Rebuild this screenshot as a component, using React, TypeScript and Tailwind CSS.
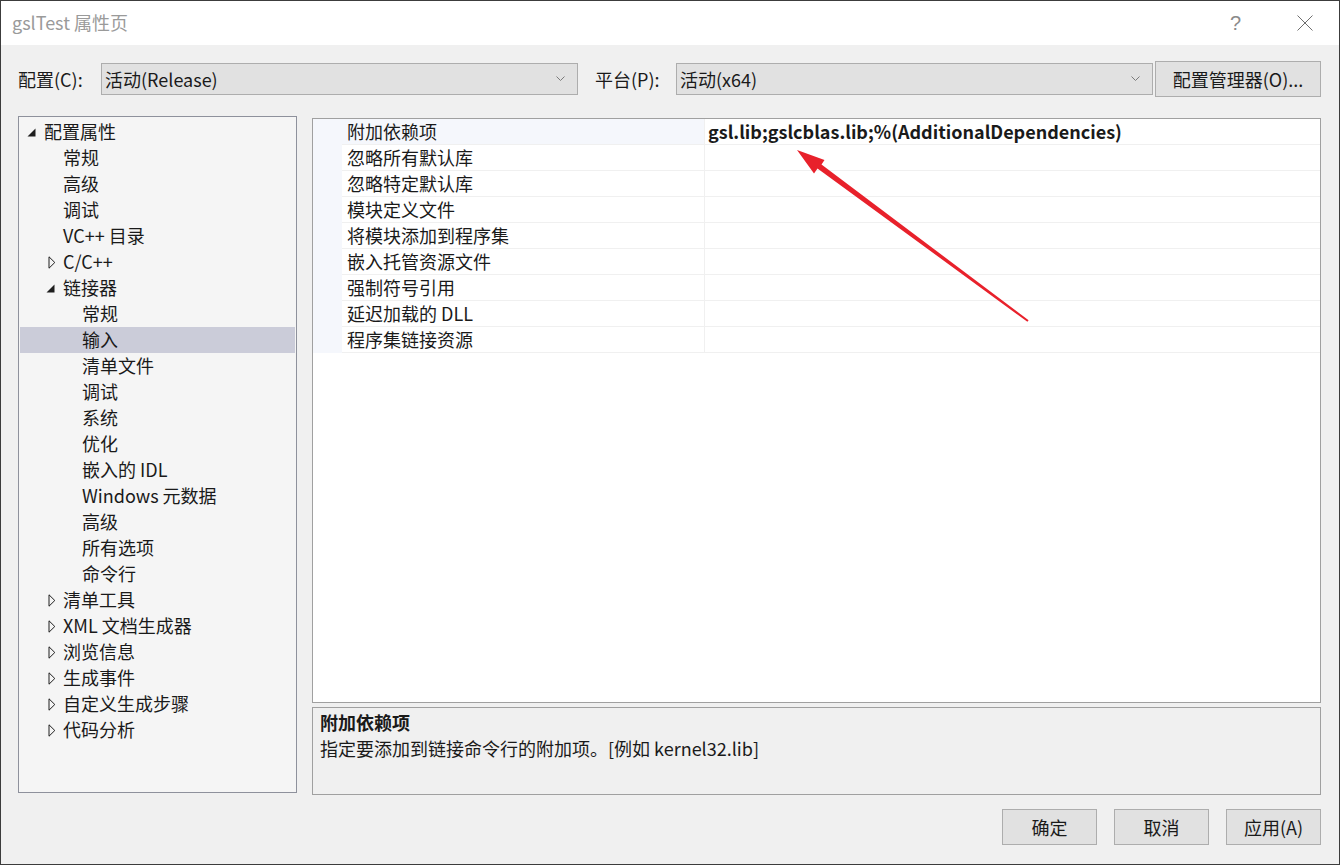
import React from 'react';

const FONT = 'font-["Noto_Sans_CJK_SC","Noto_Sans",sans-serif]';

type TreeNode = {
  label: string;
  level: 0 | 1 | 2;
  arrow?: 'open' | 'closed';
  selected?: boolean;
};

const tree: TreeNode[] = [
  { label: '配置属性', level: 0, arrow: 'open' },
  { label: '常规', level: 1 },
  { label: '高级', level: 1 },
  { label: '调试', level: 1 },
  { label: 'VC++ 目录', level: 1 },
  { label: 'C/C++', level: 1, arrow: 'closed' },
  { label: '链接器', level: 1, arrow: 'open' },
  { label: '常规', level: 2 },
  { label: '输入', level: 2, selected: true },
  { label: '清单文件', level: 2 },
  { label: '调试', level: 2 },
  { label: '系统', level: 2 },
  { label: '优化', level: 2 },
  { label: '嵌入的 IDL', level: 2 },
  { label: 'Windows 元数据', level: 2 },
  { label: '高级', level: 2 },
  { label: '所有选项', level: 2 },
  { label: '命令行', level: 2 },
  { label: '清单工具', level: 1, arrow: 'closed' },
  { label: 'XML 文档生成器', level: 1, arrow: 'closed' },
  { label: '浏览信息', level: 1, arrow: 'closed' },
  { label: '生成事件', level: 1, arrow: 'closed' },
  { label: '自定义生成步骤', level: 1, arrow: 'closed' },
  { label: '代码分析', level: 1, arrow: 'closed' },
];

const indent = ['pl-[7px]', 'pl-[26px]', 'pl-[45px]'];

const props = [
  { name: '附加依赖项', value: 'gsl.lib;gslcblas.lib;%(AdditionalDependencies)' },
  { name: '忽略所有默认库', value: '' },
  { name: '忽略特定默认库', value: '' },
  { name: '模块定义文件', value: '' },
  { name: '将模块添加到程序集', value: '' },
  { name: '嵌入托管资源文件', value: '' },
  { name: '强制符号引用', value: '' },
  { name: '延迟加载的 DLL', value: '' },
  { name: '程序集链接资源', value: '' },
];

function Chevron() {
  return (
    <svg width="9" height="6" viewBox="0 0 9 6" className="shrink-0">
      <path d="M0.5 0.5 L4.5 4.5 L8.5 0.5" fill="none" stroke="#7a7a7a" strokeWidth="1" />
    </svg>
  );
}

function Combo({ text }: { text: string }) {
  return (
    <div className="w-[477px] h-[32px] bg-[#e1e1e1] border border-[#adadad] flex items-center justify-between pl-[3px] pr-[12px]">
      <span className="leading-[26px] -mt-[1px]">{text}</span>
      <Chevron />
    </div>
  );
}

function Arrow({ kind }: { kind?: 'open' | 'closed' }) {
  if (kind === 'open') {
    return (
      <svg width="9" height="9" viewBox="0 0 9 9">
        <path d="M8.5 0.5 L8.5 8.5 L0.5 8.5 Z" fill="#1e1e1e" />
      </svg>
    );
  }
  if (kind === 'closed') {
    return (
      <svg width="8" height="13" viewBox="0 0 8 13" className="ml-[2px]">
        <path d="M1 0.8 L6.8 6.5 L1 12.2 Z" fill="none" stroke="#1e1e1e" strokeWidth="1" />
      </svg>
    );
  }
  return null;
}

function Button({ label, className = '' }: { label: string; className?: string }) {
  return (
    <div className={`h-[36px] bg-[#e1e1e1] border border-[#adadad] flex items-center justify-center ${className}`}>
      <span className="leading-[26px] -mt-[1px]">{label}</span>
    </div>
  );
}

export default function App() {
  return (
    <div className={`relative w-[1340px] h-[865px] border border-[#3c3c3c] bg-[#f0f0f0] flex flex-col overflow-hidden text-[18px] text-[#1a1a1a] ${FONT}`}>
      {/* title bar */}
      <div className="h-[44px] bg-white flex items-center justify-between pl-[11px] pr-[26px] pb-[3px] shrink-0">
        <span className="text-[#9a9a9a] leading-[26px]">gslTest 属性页</span>
        <div className="flex items-center gap-[56px] pt-[2px]">
          <span className="text-[#8a8a8a] text-[20px] leading-[26px] font-['Liberation_Sans',sans-serif]">?</span>
          <svg width="16" height="16" viewBox="0 0 16 16">
            <path d="M0.5 0.5 L15.5 15.5 M15.5 0.5 L0.5 15.5" stroke="#6e6e6e" strokeWidth="1" />
          </svg>
        </div>
      </div>

      <div className="flex-1 flex flex-col pl-[17px] pr-[18px]">
        {/* config row */}
        <div className="mt-[16px] h-[36px] flex items-center shrink-0">
          <span className="w-[83px] leading-[26px] -mt-[1px]">配置(C):</span>
          <Combo text="活动(Release)" />
          <span className="ml-[17px] w-[81px] leading-[26px] -mt-[1px]">平台(P):</span>
          <Combo text="活动(x64)" />
          <Button label="配置管理器(O)..." className="ml-[2px] w-[166px]" />
        </div>

        {/* main area */}
        <div className="mt-[19px] flex items-start gap-[15px]">
          <div className="w-[279px] h-[677px] bg-[#f5f5f5] border border-[#8e919c] pt-[2px] px-[1px] shrink-0">
            {tree.map((n, i) => (
              <div
                key={i}
                className={`h-[26px] flex items-center ${indent[n.level]} ${n.selected ? 'bg-[#cbccd9]' : ''}`}
              >
                <div className="w-[17px] h-[26px] flex items-center">
                  <Arrow kind={n.arrow} />
                </div>
                <span className="leading-[24px] mb-[2px] whitespace-nowrap">{n.label}</span>
              </div>
            ))}
          </div>

          <div className="flex-1 mt-[2px] flex flex-col gap-[4px]">
            <div className="h-[585px] bg-white border border-[#a0a0a0]">
              {props.map((p, i) => (
                <div key={i} className="flex h-[26px]">
                  <div className="w-[29px] bg-[#f5f7fc]" />
                  <div
                    className={`w-[363px] border-b border-r border-[#f0f0f0] pl-[5px] leading-[24px] whitespace-nowrap ${i === 0 ? 'bg-[#f5f7fc]' : ''}`}
                  >
                    {p.name}
                  </div>
                  <div className="flex-1 border-b border-[#f0f0f0] pl-[3px] leading-[24px] font-bold whitespace-nowrap">
                    {p.value}
                  </div>
                </div>
              ))}
            </div>
            <div className="h-[88px] bg-[#f0f0f0] border border-[#a0a0a0] pl-[7px] pt-[1px]">
              <div className="font-bold leading-[26px]">附加依赖项</div>
              <div className="leading-[26px]">指定要添加到链接命令行的附加项。[例如 kernel32.lib]</div>
            </div>
          </div>
        </div>

        {/* buttons */}
        <div className="mt-[14px] flex justify-end gap-[17px]">
          <Button label="确定" className="w-[95px]" />
          <Button label="取消" className="w-[95px]" />
          <Button label="应用(A)" className="w-[95px]" />
        </div>
      </div>

      {/* red annotation arrow */}
      <svg width="1340" height="865" className="absolute -left-px -top-px pointer-events-none">
        <polygon
          points="797,150 824.5,160 821.5,164.5 1028.6,320.2 1027.4,321.8 817.5,168.5 814,173.5"
          fill="#e8212b"
        />
      </svg>
    </div>
  );
}
